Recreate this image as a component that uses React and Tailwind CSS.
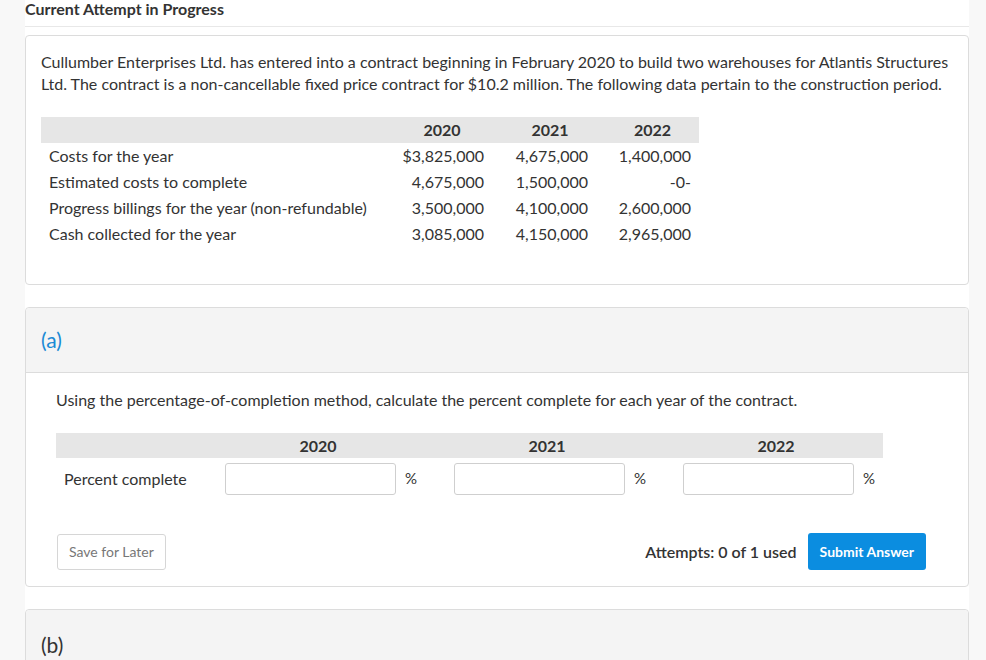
import React from "react";

const rows = [
  ["Costs for the year", "$3,825,000", "4,675,000", "1,400,000"],
  ["Estimated costs to complete", "4,675,000", "1,500,000", "-0-"],
  ["Progress billings for the year (non-refundable)", "3,500,000", "4,100,000", "2,600,000"],
  ["Cash collected for the year", "3,085,000", "4,150,000", "2,965,000"],
];

function Group() {
  return (
    <div className="flex items-center w-[186px] shrink-0">
      <div className="w-[171px] h-[32px] shrink-0 border border-[#cfcfcf] rounded-[3px] bg-white" />
      <span className="ml-[9px] text-[15px] text-[#333]">%</span>
    </div>
  );
}

export default function App() {
  return (
    <div className="flex w-[986px] h-[660px] bg-[#f8f8f8] overflow-hidden text-[#333]" style={{ fontFamily: "Lato, 'Open Sans', sans-serif" }}>
      <div className="ml-[25px] w-[944px] shrink-0 bg-white flex flex-col">
        <div className="h-[27px] shrink-0 border-b border-[#e8e8e8]">
          <div className="text-[16px] font-bold leading-[18px] text-[#333]">Current Attempt in Progress</div>
        </div>

        <div className="shrink-0 mt-[8px] border border-[#dcdcdc] rounded-[4px] pt-[15px] pb-[37px] px-[15px]">
          <p className="text-[16px] leading-[22px] text-[#333]">
            Cullumber Enterprises Ltd. has entered into a contract beginning in February 2020 to build two warehouses for Atlantis Structures Ltd. The contract is a non-cancellable fixed price contract for $10.2 million. The following data pertain to the construction period.
          </p>
          <div className="mt-[22px] w-[658px] text-[16px]">
            <div className="flex h-[26px] items-center bg-[#e6e6e6] font-bold">
              <div className="w-[351px]" />
              <div className="w-[100px] text-center">2020</div>
              <div className="w-[104px] text-center pl-[12px]">2021</div>
              <div className="w-[103px] text-center pl-[10px]">2022</div>
            </div>
            {rows.map((r) => (
              <div key={r[0]} className="flex h-[26px] items-center">
                <div className="w-[351px] pl-[8px] whitespace-nowrap">{r[0]}</div>
                <div className="w-[100px] text-right pr-[8px]">{r[1]}</div>
                <div className="w-[104px] text-right pr-[8px]">{r[2]}</div>
                <div className="w-[103px] text-right pr-[8px]">{r[3]}</div>
              </div>
            ))}
          </div>
        </div>

        <div className="shrink-0 mt-[22px] border border-[#dcdcdc] rounded-[4px]">
          <div className="h-[65px] bg-[#f4f4f4] border-b border-[#dcdcdc] flex items-center px-[15px] rounded-t-[4px]">
            <span className="text-[21px] text-[#1a8ad4]">(a)</span>
          </div>
          <div className="px-[30px] pt-[16px] pb-[16px]">
            <p className="text-[16px] leading-[22px]">Using the percentage-of-completion method, calculate the percent complete for each year of the contract.</p>
            <div className="mt-[22px] w-[827px] text-[16px]">
              <div className="flex h-[25px] items-center bg-[#e6e6e6] font-bold">
                <div className="w-[169px] shrink-0" />
                <div className="w-[186px] shrink-0 text-center">2020</div>
                <div className="w-[43px] shrink-0" />
                <div className="w-[186px] shrink-0 text-center">2021</div>
                <div className="w-[43px] shrink-0" />
                <div className="w-[186px] shrink-0 text-center">2022</div>
              </div>
              <div className="flex items-center h-[41px]">
                <div className="w-[169px] shrink-0 pl-[8px]">Percent complete</div>
                <Group />
                <div className="w-[43px] shrink-0" />
                <Group />
                <div className="w-[43px] shrink-0" />
                <Group />
              </div>
            </div>
            <div className="mt-[34px] flex items-center justify-between pr-[12px]">
              <button className="ml-[1px] h-[36px] px-[11px] border border-[#d6d6d6] rounded-[3px] text-[14px] text-[#777] bg-white">Save for Later</button>
              <div className="flex items-center">
                <span className="text-[16px] font-semibold text-[#333]">Attempts: 0 of 1 used</span>
                <button className="ml-[11px] h-[37px] px-[12px] rounded-[3px] bg-[#0b8de0] text-white text-[14px] font-bold">Submit Answer</button>
              </div>
            </div>
          </div>
        </div>

        <div className="shrink-0 mt-[22px] border border-[#dcdcdc] rounded-[4px]">
          <div className="h-[70px] bg-[#f4f4f4] flex items-center px-[15px] rounded-t-[4px]">
            <span className="text-[21px] text-[#333]">(b)</span>
          </div>
        </div>
      </div>
    </div>
  );
}
